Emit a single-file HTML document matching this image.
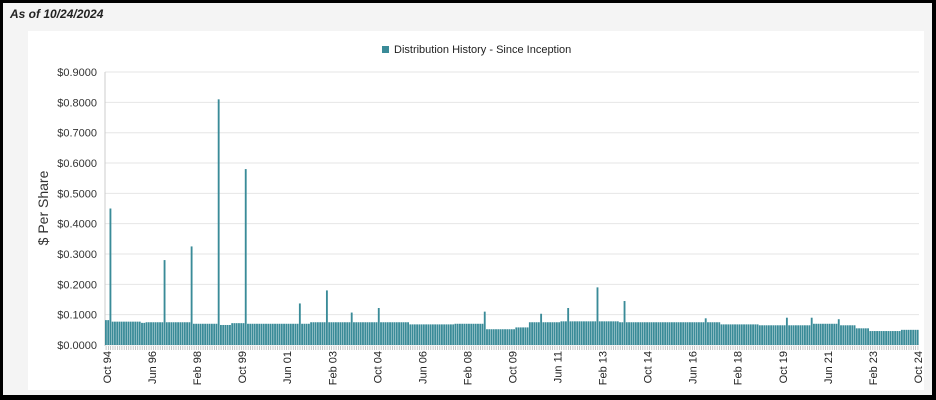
<!DOCTYPE html>
<html><head><meta charset="utf-8"><style>
body{margin:0;width:936px;height:400px;overflow:hidden;background:#000;font-family:"Liberation Sans",Arial,sans-serif}
#frame{position:absolute;left:3px;top:3px;width:929px;height:392px;background:#f4f4f4}
#asof{position:absolute;left:7px;top:4px;font-size:12px;font-style:italic;font-weight:bold;color:#222}
#panel{position:absolute;left:25px;top:28px;width:896px;height:359px;background:#fff}
svg{position:absolute;left:0;top:0}
</style></head><body>
<div id="frame"><div id="asof">As of 10/24/2024</div><div id="panel"></div></div>
<svg id="s" width="936" height="400" font-family="Liberation Sans, Arial, sans-serif"></svg>
<script>
var s=document.getElementById('s'),h='';
var y0=345,k=303.3;
for(var i=0;i<=9;i++){var y=y0-i*30.33;
h+='<line x1="105" x2="919" y1="'+y+'" y2="'+y+'" stroke="#e6e6e6" stroke-width="1"/>';
h+='<text x="97" y="'+(y+4)+'" font-size="11" text-anchor="end" fill="#333">$0.'+i+'000</text>';}
h+='<line x1="105" x2="105" y1="72" y2="346" stroke="#ccc"/>';
var lv=[[105,0.082],[112,0.077],[140,0.073],[145,0.075],[190,0.07],[218,0.066],[232,0.072],[245,0.07],[310,0.075],[380,0.075],[410,0.068],[455,0.07],[485,0.052],[515,0.058],[530,0.075],[560,0.078],[620,0.075],[720,0.068],[760,0.065],[800,0.065],[812,0.07],[840,0.065],[855,0.055],[870,0.046],[900,0.05],[920,0]];
var sp=[[110,0.45],[164,0.28],[191,0.325],[218,0.81],[245,0.58],[299,0.137],[326,0.18],[353,0.107],[380,0.122],[486,0.11],[542,0.103],[569,0.122],[597,0.19],[624,0.145],[705,0.088],[786,0.09],[812,0.09],[839,0.085]];
function lvl(x){var v=lv[0][1];for(var j=0;j<lv.length;j++)if(x>=lv[j][0])v=lv[j][1];return v;}
var w=814/361;
for(var n=0;n<361;n++){var x=105+n*w,v=lvl(x+w/2);
for(var j=0;j<sp.length;j++)if(Math.abs(sp[j][0]-(x+w/2))<w/2+0.01)v=sp[j][1];
var hh=v*k;h+='<rect x="'+x.toFixed(2)+'" y="'+(y0-hh).toFixed(2)+'" width="'+(w-0.4).toFixed(2)+'" height="'+hh.toFixed(2)+'" fill="#3a8b98"/>';
h+='<line x1="'+(x+w/2).toFixed(1)+'" x2="'+(x+w/2).toFixed(1)+'" y1="346" y2="350" stroke="#bbb" stroke-width="0.8"/>';}
var lb=['Oct 94','Jun 96','Feb 98','Oct 99','Jun 01','Feb 03','Oct 04','Jun 06','Feb 08','Oct 09','Jun 11','Feb 13','Oct 14','Jun 16','Feb 18','Oct 19','Jun 21','Feb 23','Oct 24'];
for(var i=0;i<lb.length;i++){var x=107+i*45.05+4;
h+='<text transform="translate('+x.toFixed(1)+',351) rotate(-90)" font-size="11" text-anchor="end" fill="#222">'+lb[i]+'</text>';}
h+='<text transform="translate(48,208) rotate(-90)" font-size="14" text-anchor="middle" fill="#333">$ Per Share</text>';
h+='<rect x="382" y="46" width="7" height="7" fill="#3a8b98"/><text x="394" y="53" font-size="11" fill="#222">Distribution History - Since Inception</text>';
s.innerHTML=h;
</script>
</body></html>
